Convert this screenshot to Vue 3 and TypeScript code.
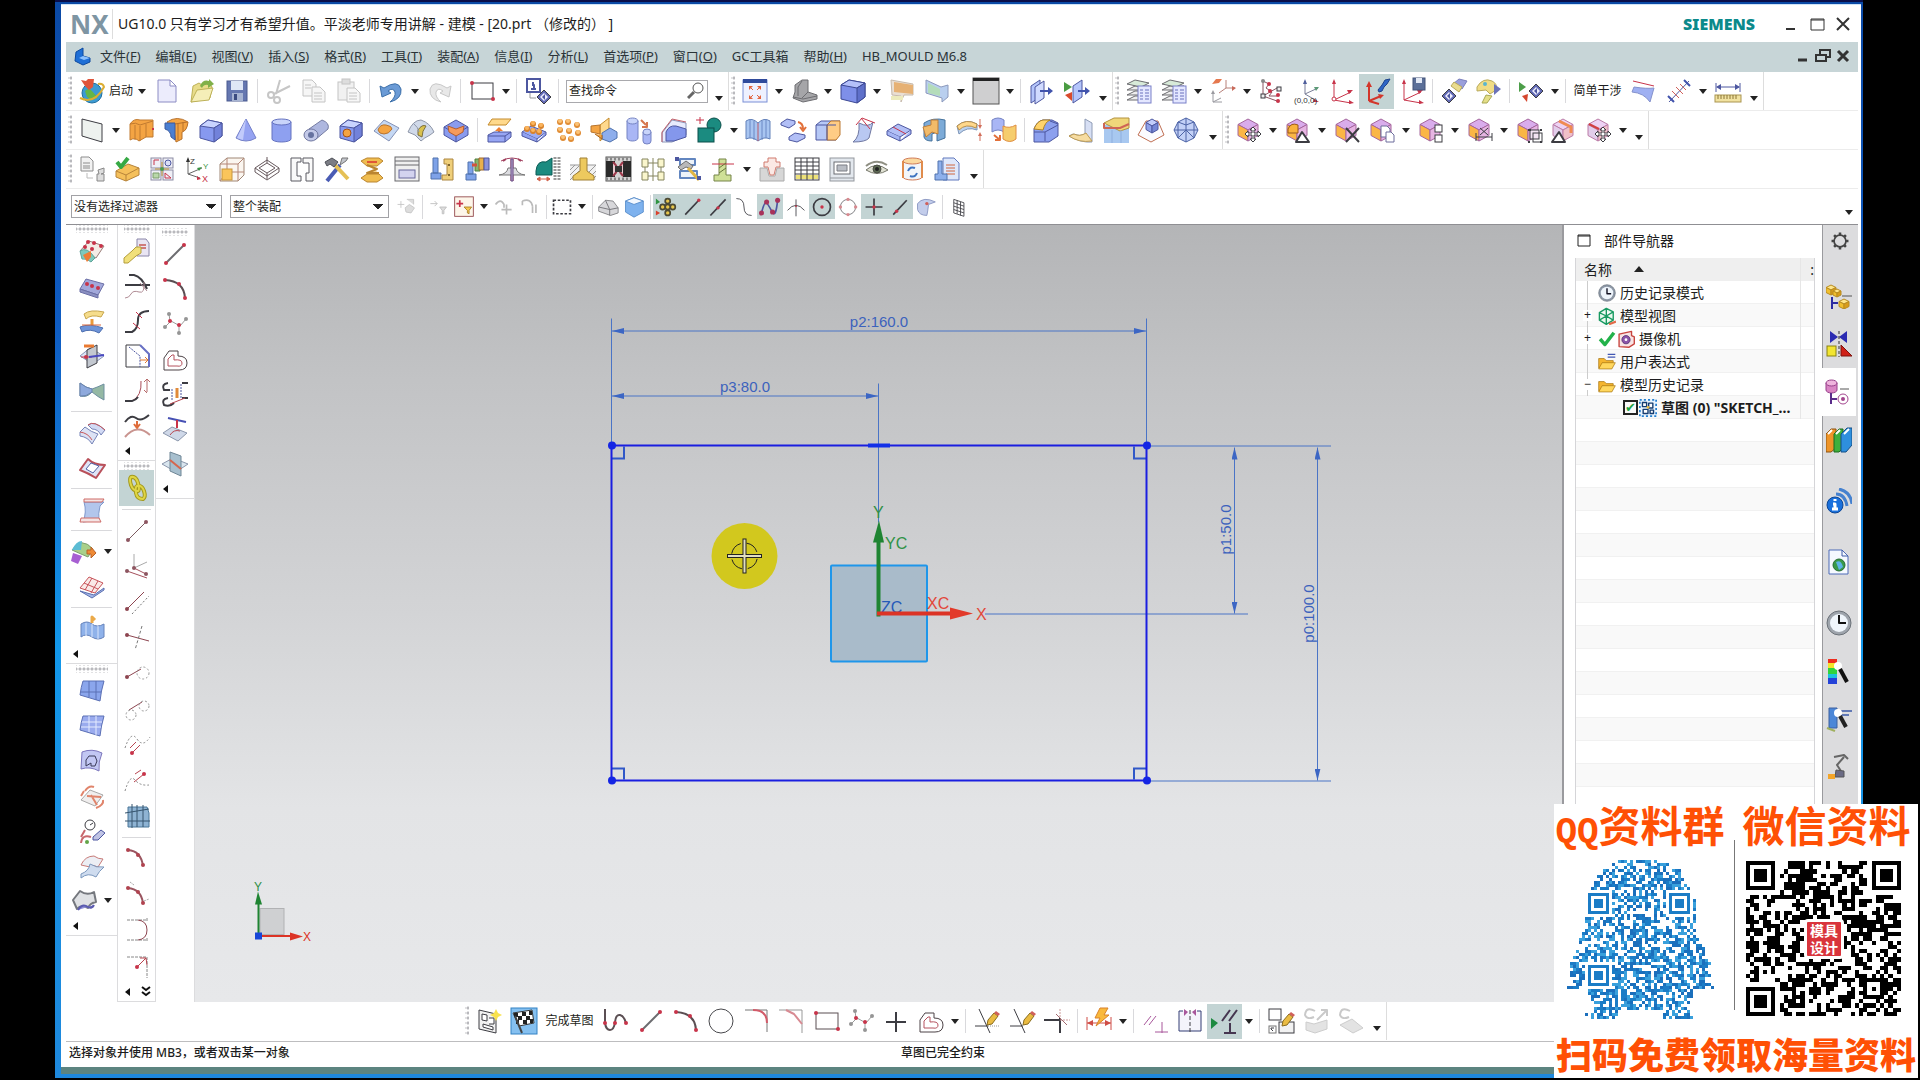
<script setup lang="ts">
interface Item {
  kind: 'icon' | 'arrow' | 'more' | 'sep' | 'handle' | 'text' | 'search' | 'combo' | 'foot'
  name: string
  active: boolean
}

/* ---------- small drawing helpers, all on a 26 x 26 grid ---------- */
const P = (d: string, fill = 'none', stroke = 'none', w = 1, dash = '') =>
  `<path d="${d}" fill="${fill}" stroke="${stroke}" stroke-width="${w}" stroke-linejoin="round"${dash ? ` stroke-dasharray="${dash}"` : ''}/>`
const C = (x: number, y: number, r: number, fill = 'none', stroke = 'none', w = 1) =>
  `<circle cx="${x}" cy="${y}" r="${r}" fill="${fill}" stroke="${stroke}" stroke-width="${w}"/>`
const R = (x: number, y: number, w: number, h: number, fill = 'none', stroke = 'none', sw = 1) =>
  `<rect x="${x}" y="${y}" width="${w}" height="${h}" fill="${fill}" stroke="${stroke}" stroke-width="${sw}"/>`
const T = (x: number, y: number, s: string, size: number, fill: string) =>
  `<text x="${x}" y="${y}" font-size="${size}" font-family="Liberation Sans, sans-serif" fill="${fill}">${s}</text>`
const cube = (x: number, y: number, s: number, t: string, l: string, r: string, st: string) => {
  const k = Math.round(s * 0.9)
  const h = s / 2
  return P(`M${x} ${y - s}l${k} ${h}l${-k} ${h}l${-k} ${-h}z`, t, st) +
    P(`M${x - k} ${y - h}l${k} ${h}v${s}l${-k} ${-h}z`, l, st) +
    P(`M${x + k} ${y - h}l${-k} ${h}v${s}l${k} ${-h}z`, r, st)
}
const can = (x: number, y: number, w: number, h: number, a: string, b: string, st: string) =>
  P(`M${x} ${y}v${h}a${w / 2} 3 0 0 0 ${w} 0v${-h}`, a, st) +
  `<ellipse cx="${x + w / 2}" cy="${y}" rx="${w / 2}" ry="3" fill="${b}" stroke="${st}"/>`
const dots = (pts: number[][], color = '#c8344a', r = 2) => pts.map(([x, y]) => C(x, y, r, color)).join('')

const NAVY = '#4d57a0'
const SKY = '#c8d4fa'
const ORANGE = '#f4a443'
const CREAM = '#ffd98d'
const RED = '#c8344a'
const GREY = '#6c6c70'
const DARK = '#3c3c42'
const TEAL = '#1b8b80'

const moldCube = cube(12, 13, 11, '#d9acec', '#fab645', '#e6b4e2', '#a5669d')
const roseCube = cube(12, 13, 11, '#edd2f4', '#e2cdea', '#efc0c8', '#bb7ba6')
const cross4 = P('M17 10l3 3h-2v3h4v-2l3 3l-3 3v-2h-4v4h2l-3 3l-3 -3h2v-4h-4v2l-3 -3l3 -3v2h4v-3h-2z', '#fff', DARK)
const triMark = P('M17 15l7 10h-13z', '#fff', DARK, 2)
const axes = P('M5 22V3M5 22l17 -8M5 22l17 3', 'none', RED, 1) + P('M5 1l-2 5h4zM24 12l-6 0l2 4zM25 25l-5 -3v4z', RED)
const gAxes = P('M11 16V3M11 16l13 -6M11 16l12 7', 'none', '#7b7f98', 1) + P('M11 1l-2 5h4z', '#4f5f9c') + P('M25 9l-5 0l2 4z', '#5c9a77') + P('M25 24l-5 -3l-1 3z', RED)
const diamondMark = (x: number, y: number) => P(`M${x} ${y - 7}l7 7l-7 7l-7 -7z`, '#6169b5', DARK) + P(`M${x} ${y - 4}l4 4l-4 4l-4 -4z`, '#eef') + P(`M${x + 1} ${y - 3}v6l-3 -3z`, NAVY)
const pencil = (x: number, y: number) => P(`M${x} ${y}l1 -5l6 -7l4 3l-6 8z`, '#eabb42', '#8a6d1e') + P(`M${x + 7} ${y - 12}l2 -2l4 3l-2 2z`, '#d0605a')
const sheets = P('M1 22l8 -4h12l-8 4z', '#eee', GREY) + P('M1 17l8 -4h14l-8 4z', '#eee', GREY) + P('M1 12l8 -4h14l-8 4z', '#eee', GREY) + P('M1 6l8 -4l14 3l-8 4z', '#d7ead8', GREY) +
  R(12, 8, 13, 17, '#e4e7ff', '#7a80c8') + P('M14 12h3M19 12h4M14 15h3M19 15h4M14 18h3M19 18h4M14 21h3M19 21h4', 'none', '#6a70bc')
const folder = P('M1 22V8h8l3 3h10v3', '#f5b52e', '#a5730e') + P('M1 23l5 -9h19l-5 9z', '#ffd75e', '#a5730e')
const ghost = P('M3 10h8M7 6v8M12 14l5 -4l6 4l-4 6l-6 -1zM14 4h8v6', '#ddd', '#c4c4c4')

const icons: Record<string, string> = {
  globe: C(13, 15, 10, '#3b9ad3', '#1d6e9f') + P('M6 13q4 -4 7 0t6 6q-6 5 -11 0z', '#63b648') + P('M1 20q14 7 24 -11q-1 -4 -6 -3', 'none', '#dcae33', 2) + P('M2 2l5 1l2 -2h6l-1 8l-4 3l-4 -4z', '#e0543b'),
  new: P('M4 2h12l6 6v16h-18z', '#ececfc', '#8c8cc4') + P('M16 2v6h6z', '#fff', '#8c8cc4'),
  open: P('M2 24l2 -16l6 -3l3 2l7 -2l3 4l-2 11z', '#e8dc8a', '#bdb157') + P('M2 24l6 -12l16 -2l-4 12z', '#f5eeb8', '#bdb157') + P('M11 8q3 -7 9 -5v-2l5 5l-6 4v-3q-4 -1 -6 3z', '#80b049'),
  save: R(3, 3, 20, 20, '#6577b0', '#4b5b90') + R(7, 3, 12, 9, '#dfe7f6') + R(8, 15, 11, 8, '#a8b5d3') + R(10, 16, 3, 6, '#3b4b80'),
  cut: P('M14 2l-4 14M24 8l-16 8', 'none', '#c6c6c6', 2) + C(5, 17, 3, 'none', '#c6c6c6', 2) + C(11, 22, 3, 'none', '#c6c6c6', 2),
  copy: P('M2 2h9l4 4v12h-13z', '#f6f6f6', '#c4c4c4') + P('M11 9h8l5 5v10h-13z', '#f6f6f6', '#c4c4c4') + P('M13 15h8M13 18h8M13 21h8M4 7h6M4 10h6', 'none', '#c4c4c4'),
  paste: R(2, 4, 16, 18, '#f1f1f1', '#c4c4c4') + R(6, 1, 8, 5, '#ddd', '#c4c4c4') + P('M11 10h8l5 5v9h-13z', '#f7f7f7', '#c4c4c4') + P('M13 15h8M13 18h8M13 21h8', 'none', '#c4c4c4'),
  undo: P('M2 8L4 19L13 15L10 13Q15 9 17 14Q18 19 12 24Q24 21 23 11Q20 1 6 10z', '#6b9bd6', '#3d70a9'),
  redo: P('M24 8l-2 11l-9 -4l3 -2q-5 -4 -7 1q-1 5 5 10q-12 -3 -11 -13q3 -10 17 -1z', '#e8e8e8', '#c8c8c8'),
  rectsel: R(3, 5, 21, 16, '#fff', DARK) + dots([[3, 5], [24, 21]]),
  info: R(2, 1, 13, 13, '#fff', NAVY, 2) + P('M8 4v2M7 7h2v4M6 11h5', 'none', NAVY, 2) + P('M5 15v5h6', 'none', '#999') + diamondMark(19, 19),
  fit: R(1, 2, 24, 22, '#eef1ff', '#7b8fd6', 1) + R(1, 1, 24, 4, '#2f4a9b') + P('M7 8h4l-4 4zM19 8h-4l4 4zM7 21h4l-4 -4zM19 21h-4l4 -4z', '#e2643d') + P('M8 9l3 3M18 9l-3 3M8 20l3 -3M18 20l-3 -3', 'none', '#e2643d'),
  shade: P('M4 7l7 -5h6v12l9 3v4l-14 3l-10 -4l2 -6z', '#a5a5a8', '#6d6d71') + P('M2 19l10 2l14 -3M11 20l6 -6M11 3l-4 6v9', 'none', '#6d6d71'),
  cubeb: P('M1 7l8 -5l16 3v14l-8 6l-16 -4z', '#7e8fe9', '#3c4894') + P('M1 7l8 -5l16 3l-8 5z', '#b4c0fa', '#3c4894') + P('M17 10l8 -5v14l-8 6z', '#5f70ca', '#3c4894'),
  flago: P('M2 2l22 4v11h-9l-3 7v-6l-9 -1z', '#e9dfd3', '#c6b9ab') + P('M5 4l19 3v9l-19 -2z', '#e6b174') + P('M2 18h12v4h-12z', '#ecebbd'),
  flagb: P('M2 2l15 7l7 -2v12l-6 5v-4l-16 -5z', '#b9cfef', '#8c99bc') + P('M4 5l12 6v7l-12 -3z', '#b4dcba'),
  greybox: R(0, 0, 26, 26, '#cfcfd0', '#555', 1) + R(0, 0, 26, 3, '#222'),
  door1: P('M2 8l9 -6v17l-9 6z', '#b4c5fb', NAVY) + P('M6 9l9 -6v17l-9 6z', '#d1dbff', NAVY) + P('M11 12h8v-3l5 4l-5 4v-3h-8z', '#4153ac'),
  door2: P('M9 8l9 -6v17l-9 6z', '#b4c5fb', NAVY) + P('M0 4l8 5l-8 5z', '#4a9c42') + P('M1 17l7 -3v9z', '#d94b2c') + P('M14 12h7v-3l5 4l-5 4v-3h-7z', '#4153ac'),
  layers: sheets,
  csysmove: P('M3 14v10l8 -4M3 24h9', 'none', '#9a9aa0', 1) + P('M16 2v8h9M16 10l-7 5', 'none', '#b78079', 1) + P('M2 6l4 -5h6l-3 4z', '#e5784e') + P('M22 8l4 2l-4 3z', '#c96a5a') + P('M3 12l-2 4h4z', '#9a9aa0'),
  tree: P('M4 3v15l14 -8M4 3l6 3l-3 4l6 4l-3 4h8M4 18l14 5', 'none', '#8a5560', 1) + dots([[10, 6], [11, 13], [19, 17], [19, 23]]) + C(4, 3, 2, '#888') + R(2, 16, 4, 4, '#eee', DARK) + R(18, 9, 4, 4, '#eee', DARK),
  csys0: gAxes + T(0, 25, '(0,0,0)', 8, '#333'),
  csysr: axes + C(5, 21, 2, '#fff', RED),
  csysact: P('M5 23V7M5 23l12 -5M5 23l10 3', 'none', '#d3362b', 2) + P('M5 3l-3 6h6zM20 17l-6 -1l2 5z', '#d3362b') + P('M14 12l4 -5l3 -5l5 -1l-3 5l-3 3l-2 4l-3 1z', '#2f67c6', '#1e448c'),
  csyssave: axes + R(14, 0, 12, 12, '#5b6f98', '#435379') + R(17, 0, 6, 5, '#e3e9f5'),
  brush: P('M12 6l6 -5l8 2l-5 8z', '#9a9fdb', '#7b80bd') + P('M10 8l3 -4l8 5l-3 5z', '#eadc8d', '#b9a95c') + diamondMark(8, 18),
  fish: P('M1 9q6 -10 15 -6q6 3 4 9l-6 4l-4 -4l-9 1z', '#f0dc85', '#b9aa5d') + P('M10 17l-4 8h5l5 -7z', '#e4de88', '#a9a955') + C(9, 6, 2, '#5bb5cf') + P('M18 6l7 5l-7 6z', '#6b73b9'),
  play: P('M1 4l7 5l-7 5z', '#4c9e49') + P('M4 18l6 -2l-1 8z', '#d5472e') + diamondMark(18, 13),
  surf: P('M2 3l21 5', 'none', RED) + P('M3 9q13 2 20 1l-4 14q-6 -9 -18 -10z', '#9fb0f2', '#8592cc'),
  meas: P('M3 24l20 -21', 'none', NAVY) + P('M2 18l6 6M18 2l6 6', 'none', '#4153ac', 2) + P('M6 13l7 7M10 9l7 7M14 6l6 6', 'none', '#d0605a', 1),
  ruler: P('M1 5v9M25 5v9M2 9h22', 'none', NAVY, 1) + P('M1 9l5 -3v6zM25 9l-5 -3v6z', NAVY) + R(0, 17, 26, 7, '#f1e2a0', '#aa9550') + P('M3 17v4M6 17v4M9 17v4M12 17v4M15 17v4M18 17v4M21 17v4', 'none', '#8c7736'),
  /* feature bar */
  plane: P('M3 2l20 5v18l-20 -6z', '#eef2ef', DARK, 1),
  extrude: P('M2 7q4 -6 10 -4h13v17h-7l-7 4q-4 -4 -9 -1z', ORANGE, '#c07a30') + P('M2 7q6 -2 10 1l13 -4M7 8v15M12 9v15M18 7v13', 'none', '#c07a30') + P('M24 12h2', 'none', RED, 2),
  revolve: P('M4 5q10 -7 21 0q-1 9 -6 10v7l-6 3q-1 -12 -9 -20z', ORANGE, '#b7702a') + P('M2 6h10v17l-4 -3q0 -6 -6 -8z', '#4b7fd1', '#3d5b9e') + P('M15 7v16M20 5v9M12 7l12 -2', 'none', '#b7702a'),
  block: P('M2 9l8 -6l14 3v13l-8 6l-14 -4z', '#8799ef', NAVY) + P('M2 9l8 -6l14 3l-8 5z', '#c9d4ff', NAVY) + P('M16 11l8 -5v13l-8 6z', '#7282da', NAVY),
  cone: P('M13 2l10 19q-10 6 -20 0z', '#95a3f2', '#7480c8') + P('M13 2l-3 21l-6 -2z', '#c2cbfb'),
  cyl: can(4, 5, 19, 17, '#8ea0f0', SKY, '#6472c0'),
  tube: P('M6 12l13 -9q8 3 6 9l-13 11z', '#aeb7df', '#757ca2') + `<ellipse cx="8" cy="18" rx="7" ry="6" fill="#c3c9e8" stroke="#6f76a0"/>` + C(8, 18, 3, '#6672a0'),
  holecube: P('M2 9l8 -6l14 3v13l-8 6l-14 -4z', '#8799ef', NAVY) + P('M2 9l8 -6l14 3l-8 5z', '#c9d4ff', NAVY) + P('M16 11l8 -5v13l-8 6z', '#7282da', NAVY) + C(9, 16, 4, ORANGE, '#a35218'),
  boss: P('M1 14l10 -11l15 8l-10 13z', '#c5d8f4', '#8592b6') + P('M5 13q2 -6 8 -5q6 1 6 4q-3 5 -8 5q-5 0 -6 -4z', ORANGE, '#b77330'),
  shell: P('M0 15q5 -12 13 -12q9 3 13 12l-4 3q-6 3 -9 6l-6 -6z', '#d0d9e9', '#8e96a8') + P('M10 13q4 -6 8 -4q-4 5 -4 11l-4 -2z', '#d9c14e', '#7c6f3b') + P('M6 7q4 3 5 8', 'none', '#8e96a8'),
  pad: P('M1 10l12 -7l12 7v8l-12 7l-12 -7z', '#8a9bee', NAVY) + P('M1 10l12 7l12 -7M13 17v8', 'none', NAVY) + P('M5 9l8 3l8 -3l-1 6l-7 4l-7 -4z', '#f79b5c', '#b45e31'),
  datumup: P('M6 2h19l-5 6h-18z', CREAM, '#c48b2d') + P('M12 18v-4h-3l4 -4l4 4h-3v4z', '#ef8132') + P('M2 18l6 -3h17v5l-6 5h-17z', '#97a6f4', NAVY) + P('M2 19h17l6 -4M19 19v6', 'none', NAVY),
  pattern: P('M1 15l9 -6l15 6l-9 7z', '#9dadf4', NAVY) + P('M1 15v4l15 6v-3M25 15v3l-9 7', '#91a2f2', NAVY) + dots([[6, 12], [12, 7], [20, 9], [12, 14], [18, 15]], '#d9822a', 3) + dots([[6, 11], [12, 6], [20, 8], [12, 13], [18, 14]], '#fbb55e', 2),
  patt2: dots([[4, 5], [12, 5], [21, 8], [4, 13], [13, 14], [22, 16], [7, 21], [15, 22]], '#e08c34', 3) + dots([[4, 4], [12, 4], [21, 7], [4, 12], [13, 13], [22, 15], [7, 20], [15, 21]], '#fbc377', 2),
  mirror: P('M9 8l9 -7v15l-9 8z', CREAM, '#c48b2d') + P('M0 9l9 -1v9l-9 -2z', ORANGE, '#b7742d') + P('M11 16l8 -5l7 4v6l-7 4l-8 -3z', '#8eaeec', '#5173ad') + P('M4 17l7 5v-4', ORANGE, '#a7641d'),
  cyl2: can(1, 4, 11, 17, '#a9b6f5', SKY, '#7583c3') + can(17, 15, 8, 9, '#a9b6f5', SKY, '#7583c3') + P('M15 3l5 5M21 5v5h-5', 'none', '#d5774f', 2),
  sweep: P('M1 16l10 -13l14 3v12l-14 7h-10z', '#e7ebfd', '#8a96b8') + P('M5 24v-9q3 -7 10 -6l10 3v8l-12 4z', '#8497ec', NAVY) + P('M1 25V15l10 -13l14 3', 'none', '#c2606a'),
  unite: C(18, 8, 7, TEAL, '#0b4f4a') + R(2, 11, 16, 14, TEAL, '#0b4f4a') + P('M4 0v7M0 3h8', 'none', RED, 1),
  bookcyl: P('M1 4q6 -4 12 2q6 -6 12 -2v18q-6 -3 -12 2q-6 -5 -12 -2z', '#a8c5f1', '#6381ba') + P('M5 3v18M9 4v19M17 4v19M21 3v18', 'none', '#6a88c4') + P('M13 6v18', 'none', '#ba5a68'),
  move: P('M1 6l6 -4l8 2v3l-6 4l-8 -3zM9 20l6 -4l10 2v3l-8 4l-8 -2z', '#b2bff6', NAVY) + P('M18 5q5 1 5 7M20 10l3 4l3 -4', 'none', '#e2703a', 2),
  split: P('M1 8l5 -4h19l-4 4v15h-20z', '#b6c8f6', NAVY) + P('M12 8l4 -4h9v14l-4 5h-9z', '#ffcc85', '#bb7831') + P('M1 8h20M12 8v15', 'none', NAVY),
  trim: P('M8 6q10 5 14 -1l-4 16q-3 4 -16 4q7 -5 6 -19z', '#b9c8f2', '#7078a1') + P('M5 8l6 -7l13 5M10 1l9 11', 'none', RED, 1),
  plate: P('M1 14l11 -7l13 6l-11 7z', '#b2bff6', NAVY) + P('M1 14v4l13 6v-4M25 13v4l-11 7', '#a6b5f4', NAVY) + P('M7 10l13 7', 'none', RED),
  wrap: P('M3 6q9 -6 21 -3v18l-8 3v-9l-5 2v7q-7 0 -8 -4z', '#7dabd8', '#46729c') + P('M2 10l8 -2v-5h7v14l-6 -2l-6 5z', '#f2bb69', '#be7e3a'),
  thicken: P('M1 9q9 -8 20 -2v6q-10 -4 -18 4z', '#bcd2ef', '#7a93b7') + P('M1 9q9 -8 20 -2l-1 4q-10 -5 -17 2z', '#ffd88b', '#b98f4a') + P('M24 2v8M24 17v7', 'none', '#d26f5b', 1) + P('M24 12l-2 -4h4zM24 15l-2 4h4z', '#d26f5b'),
  cyl3: P('M1 3q6 -4 12 0v12q-6 -4 -12 0z', '#a9b6f5', '#7583c3') + P('M12 9q6 3 13 -1v14q-6 5 -13 0z', '#f6cd6d', '#e08f43') + P('M3 18l6 5M9 18v5h-5', 'none', '#e2703a', 2),
  chamfer: P('M1 12q3 -8 9 -9h9l6 3v13l-9 6h-15z', '#8ca0ee', NAVY) + P('M1 12q3 -8 9 -9h7q-5 2 -7 10z', '#ffd36b', '#b08322') + P('M1 15h11v9M12 15l13 -7M17 4l8 3', 'none', NAVY),
  draft: P('M17 2l7 4v19q-11 1 -23 -6l4 -2q7 3 12 0z', '#d7dff4', '#8f9cb6') + P('M1 19l5 -2q6 3 12 -1l6 8q-13 2 -23 -5z', '#f6dca1', '#be9b52'),
  boxface: R(1, 8, 25, 18, '#a8c8f0') + P('M1 6l10 -5h15v10l-9 3z', '#f0d77a', '#b3923f') + P('M1 6v5h16l9 -4', 'none', '#cf6656', 2) + P('M9 13v13M18 13v13', 'none', '#8eaede'),
  tri: P('M8 4h12l6 14l-13 7l-13 -7z', '#fbfbff', '#c06f52') + cube(14, 9, 7, '#c2cdfb', '#90a1ea', '#7586d6', NAVY),
  sphere: P('M13 1l8 4l4 8l-4 8l-8 4l-8 -4l-4 -8l4 -8z', '#c3d1f7', '#4c63a6') + P('M1 13h24M13 1v24M5 5l8 3l8 -3M5 5v16M21 5v16M13 13l8 8M13 13l-8 8', 'none', '#4c63a6'),
  mMove: moldCube + cross4,
  mTri: moldCube + P('M3 12q3 -7 10 -4v8h-10z', '#fab23c', '#9a5a1d') + triMark,
  mX: moldCube + P('M12 11l13 14M25 11l-13 14', 'none', DARK, 2),
  mCopy: moldCube + P('M12 9h6l3 3v8h-9z', '#fff', '#6d6d9c') + P('M17 15h5l3 3v7h-8z', '#fff', '#6d6d9c'),
  mGrid: moldCube + R(17, 8, 7, 7, '#fff', DARK) + R(17, 18, 7, 7, '#fff', DARK),
  mDim: moldCube + P('M9 20h16M9 16v8M25 16v8M13 11l8 7M21 11l-8 7', 'none', DARK, 1),
  mSq: moldCube + R(14, 13, 9, 9, '#f4e4f4', DARK) + R(17, 16, 9, 9, 'none', DARK) + P('M12 12h3v2h-3zM24 24h2v2h-2zM12 24h2v2h-2zM24 12h2v2h-2z', DARK),
  rTri: roseCube + P('M8 4l12 6v6', 'none', '#f08a52', 3) + P('M8 15l6 10h-13z', '#fff', DARK, 2),
  rMove: roseCube + P('M3 7l10 5', 'none', '#d23f3f', 2) + cross4,
  /* mould bar */
  note: P('M2 1h8l4 4v10h-12z', '#f2f2f2', '#8c8c8c') + P('M4 7h7M4 10h7M4 12h7', 'none', '#8c8c8c') + P('M8 17v5h6', 'none', '#bbb') + P('M19 14l6 -2v5l-3 1h3v7h-7v-7h2z', '#ddd', '#888'),
  checkblock: P('M2 15l12 -7l11 4v7l-13 6l-10 -4z', '#f5c05b', '#b7843a') + P('M2 15l10 4l13 -7M12 19v6', 'none', '#b7843a') + P('M3 6l4 5l7 -9', 'none', '#36a944', 4),
  fourviews: [[2, 2], [14, 2], [2, 14], [14, 14]].map(([x, y]) => R(x, y, 10, 10, '#efeff6', '#8b8ba3')).join('') + C(19, 7, 3, '#d9def5', NAVY) + P('M5 9v-5h5M16 22v-5l6 5z', 'none', RED, 1) + P('M4 17h6v5h-6z', '#b9d8a9', '#7d9d6d') + P('M13 6v14M6 13h14', 'none', '#bd9431') + C(13, 13, 2, '#4c9a54'),
  csyxyz: P('M4 18V3M4 18l14 -6M4 18l12 4', 'none', '#666', 1) + P('M4 1l-2 5h4z', '#333') + P('M18 11l-5 1l2 3z', '#3a9444') + P('M17 23l-4 -3v4z', RED) + T(6, 8, 'Z', 8, '#333') + T(19, 13, 'Y', 8, '#3a9444') + T(18, 26, 'X', 9, RED),
  cornerbox: P('M1 8l7 -6h17v17l-6 6h-18z', '#fbf6f0', '#9f8674') + P('M1 8h18v17M19 8l6 -6M8 2v14l-7 9M8 16h17', 'none', '#b48677') + R(3, 13, 10, 11, '#fac55b', '#c8963d'),
  diamond: P('M1 12l12 -8l12 8l-12 8zM5 12l8 -5l8 5l-8 5zM1 12v4l12 8l12 -8v-4M13 1v6M13 17v6', 'none', '#67595d', 1),
  bracket: P('M2 2h10v4h-4v14h4v5h-10zM14 2h10v23h-7v-8h3v-10h-6z', '#fafafa', '#5a5a62', 1),
  tools: P('M3 25l13 -16', 'none', '#4a5cb4', 4) + P('M24 23l-15 -16', 'none', '#e5c055', 4) + P('M1 6l7 -4l6 4l-4 5l-4 -3l-3 2z', '#7b7d85', '#4e5058') + P('M16 9l2 -7l6 0l-2 3z', '#c2c5cc', '#777'),
  spring: P('M2 5l6 -3h12l4 3l-6 5h-10zM2 22l6 -4h12l4 4l-6 4h-10z', '#f0bd50', '#ba8530') + P('M8 9q10 4 10 4t-10 4h12', '#f7d68a', '#ba8530', 2) + P('M8 6h10', 'none', '#df5636', 2),
  table: R(1, 1, 24, 24, '#efefef', '#68686c') + P('M1 5h24M1 9h24', 'none', '#68686c') + R(5, 14, 16, 8, '#d3d3ef', '#68689c'),
  bolt1: P('M4 2h5v15h-5zM2 17h10v6h-10z', '#7ea2e8', '#5173ad') + P('M15 3h9v21h-11v-5h5v-11h-3z', '#efcf7a', '#ac8640') + C(20, 9, 1, '#5c4415') + C(20, 19, 1, '#5c4415'),
  bolt2: P('M4 6h5v12h-5zM2 18h10v6h-10z', '#7ea2e8', '#5173ad') + P('M11 3h5v12h-5z', '#86b56d', '#4f7c3a') + P('M15 2h5v12h-5z', '#e8b04b', '#9c6730') + P('M20 2h5v12h-5z', '#8a91da', '#4f5799') + P('M8 9h5', 'none', '#d2533e', 3),
  tee: P('M2 5q11 -6 22 0M12 3v22M14 3v22', 'none', '#a2415f', 1) + P('M0 19q8 -1 9 -7h8q1 6 9 7z', '#dcdce0', '#777') + P('M12 3v22h2v-22z', '#b9a8cf', '#6b4f86') + P('M4 5l3 -2M22 5l-3 -2', 'none', '#a2415f', 2),
  mouse: P('M1 15q1 -11 10 -9l6 -4v17h-16z', TEAL, '#0b5b54') + P('M20 1v24M24 1v24', 'none', '#999', 3, '2 1') + P('M2 23h13M2 23l3 -2v4zM15 23l-3 -2v4z', '#d2644e', '#d2644e'),
  moldh: R(0, 9, 26, 15, '#f1f1f1') + P('M0 9h26M0 14l5 -5M0 19l9 -9M0 24l9 -9M17 24l9 -9M22 24l4 -4M17 18l9 -9', 'none', '#999') + P('M10 2h7v13l7 5v4h-21v-4l7 -5z', '#edc95e', '#a18034'),
  blackh: R(1, 1, 25, 24, '#d3d3d3', '#555') + P('M1 5h9v16h-9zM18 5h8v16h-8z', '#2a2a2a') + P('M8 6q8 7 0 14M18 6q-7 7 0 14', '#e9c9cf', '#9e3a4c', 2) + P('M10 10h7v6h-7z', '#333') + P('M1 3h25M1 23h25', 'none', '#888', 3, '2 2'),
  frame: P('M2 3h6v8h-6zM18 3h6v8h-6zM2 16h6v8h-6zM18 16h6v8h-6zM8 7h10M8 20h10M13 2v23M5 11v5M21 11v5', '#faf6cd', '#85855f', 1),
  wrench: P('M5 3h15v6h-15zM5 15h17v7h-17z', '#edf3fa', '#6286c0', 2) + P('M3 11l8 -6l7 5l-2 3l-5 -2l-5 3z', '#b9b9b9', '#6e6e6e') + P('M13 12l11 12', 'none', '#e0b545', 3) + R(0, 1, 4, 4, NAVY) + R(22, 20, 4, 4, NAVY),
  bolth: P('M9 3h7v16h5v6h-17v-6h5z', '#cfe097', '#76854a') + P('M2 8h22', 'none', RED, 1) + P('M9 12l7 -5M9 17l7 -5', 'none', '#66753a'),
  moldred: P('M1 12h7l2 8h6l2 -8h7v13h-24z', '#d7d7d7', '#aaa', 1) + P('M9 2h8v4h4v5h-4l-2 8h-4l-2 -8h-4v-5h4z', '#fbe9e5', '#d07a6e', 1),
  grid: R(1, 2, 24, 22, '#fff', DARK) + R(2, 19, 22, 4, '#eee27a') + P('M1 6h24M1 10h24M1 14h24M1 18h24M7 2v22M13 2v22M19 2v22', 'none', DARK),
  panel: R(1, 2, 24, 23, '#e3e8ee', '#93979d') + R(5, 6, 16, 12, '#fff', '#6a6d73') + P('M8 9h10v6h-10z', '#b9bdc4', '#7a7d83') + P('M1 22h24', 'none', '#93979d'),
  eye: P('M2 14q10 -9 22 0q-11 7 -22 0z', '#dfe0d2', '#77786c', 1) + C(13, 13, 4, '#5d6a53', '#4c4e46') + C(13, 13, 2, '#222') + P('M2 10q10 -8 21 -1', 'none', '#8e8e82', 2),
  drum: can(4, 5, 19, 16, '#f3f6fa', '#fbd9a0', '#d07c58') + P('M4 5v17M23 5v17', 'none', '#e08c4d', 2) + P('M9 15q2 -5 7 -3M18 17q-2 5 -7 3', 'none', '#3f74c0', 2),
  report: P('M9 2h11l5 5v17h-16z', '#dfe8fb', '#6178bd') + P('M12 9h9M12 12h9M12 15h9M12 18h9', 'none', '#d0673f') + P('M4 5h4v13h5v6h-12v-6h3z', '#8eb0ec', '#5173ad'),
  /* selection bar */
  dimA: ghost, dimB: P('M4 9h8M12 9l-3 -3M12 9l-3 3M15 13h8l-3 4v4h-2v-4z', '#ddd', '#bbb'),
  boxed: R(2, 1, 22, 23, '#fdf6ea', '#8d3e42', 1) + P('M8 5v8M4 9h8', 'none', RED, 2) + P('M13 13h9l-3 4v4l-2 -1v-3z', '#f6c84d', '#a57b25'),
  dimC: P('M3 10q6 -8 10 0v4M16 10v12M10 16h12', 'none', '#bbb', 2), dimD: P('M4 6q10 -4 12 6M16 12v8M20 10v10M4 6v5', 'none', '#bbb', 2),
  dash: R(3, 5, 20, 16, 'none', DARK, 2).replace('/>', ' stroke-dasharray="3 2"/>'),
  house: P('M2 13l8 -8l9 1l6 8v6l-9 3l-14 -5z', '#d7d7da', '#7a7a7e') + P('M2 13l13 3l10 -2M15 16v7M10 5l5 11', 'none', '#6a6a6e'),
  opencube: P('M3 6l10 -4l11 4v13l-11 6l-10 -6z', '#7eb2ee', '#5389c9') + P('M3 6l10 4l11 -4l-11 -4z', '#f3f8ff', '#5389c9'),
  snap: P('M1 3l5 4l-5 3z', '#2f9440') + P('M1 17l5 3l-5 3z', '#d9412c') + dots([[15, 6], [9, 13], [21, 13], [15, 20], [15, 13]], '#4c4a35', 4) + dots([[15, 6], [9, 13], [21, 13], [15, 20], [15, 13]], '#e7c64c', 2),
  line: P('M5 22L21 5', 'none', DARK, 2) + dots([[21, 5]]),
  mid: P('M4 23L22 4', 'none', DARK, 2) + dots([[13, 14]]),
  curve: P('M4 3q9 0 9 10t9 10', 'none', DARK, 1),
  poly: P('M3 20Q6 8 8 8T15 18T22 4', 'none', NAVY, 2) + dots([[3, 20], [9, 7], [16, 19], [22, 5]], '#a8335a', 3),
  cross: P('M3 17q10 -12 20 0M13 4v20', 'none', DARK, 1) + C(13, 12, 1, RED),
  circ: C(13, 13, 10, 'none', DARK, 2) + dots([[13, 13]]),
  ring: C(13, 13, 9, 'none', GREY, 1) + dots([[13, 4], [4, 13], [22, 13], [13, 22]], '#d88a90', 2),
  plus: P('M13 3v20M3 13h20', 'none', DARK, 2) + dots([[13, 13]]),
  slash: P('M5 22L21 5', 'none', DARK, 2) + dots([[9, 18]]),
  face: P('M3 9q7 -9 21 -2l-8 3q-1 9 -2 13q-9 0 -11 -7z', '#c3cdeb', '#8390bd') + dots([[14, 9]], '#d0605a'),
  mesh: P('M8 4l12 4v16l-12 -4zM12 5v16M16 7v16M8 8l12 4M8 12l12 4M8 16l12 4', 'none', DARK, 1),
  /* surface columns */
  sNet: P('M1 13l9 -10l15 5l-8 12z', '#f3ece6', '#997c77') + P('M1 13q7 -5 15 7l-4 4q-4 -4 -9 -3z', '#7dc9bd', '#5fa499') + dots([[9, 4], [15, 5], [22, 8], [6, 9], [13, 11]], RED, 2) + P('M4 17l8 -4v6l-4 5z', '#ee7c35'),
  sPlate: P('M1 16l6 -10l18 5l-6 11z', '#a2a8da', '#6b6fa6') + dots([[8, 11], [13, 13], [19, 15]], RED, 2) + P('M1 16l18 6v3l-18 -6z', '#8a8fc1', '#6b6fa6'),
  sLift: P('M5 6q6 -5 20 -2l-3 5q-10 -3 -15 2z', '#f6dd8c', '#c7a64d') + P('M13 17v-6', 'none', '#eb9a3a', 3) + P('M1 19q9 -4 23 1l-4 5q-9 -5 -17 -1z', '#6e94d8', '#4d6fb0') + P('M3 17h19', 'none', '#df6b3d', 1),
  sCut: P('M1 13l10 -8l14 8l-11 8z', '#dde4f6', '#8694b8') + P('M8 7l10 -5v18l-10 5z', '#c3c8d0', DARK) + P('M5 3h10', 'none', '#ea7a31', 3) + P('M2 14h11', 'none', RED, 1) + dots([[7, 14]]) + P('M10 14l15 -2', 'none', '#4a4ac0', 2),
  sBow: P('M1 5q6 5 12 6q6 -2 12 -5v16q-6 -3 -12 -8q-5 6 -12 4z', '#94b8a4', '#6e8fa0') + P('M1 5q6 5 12 6v3q-6 5 -12 4z', '#8ea9dc', '#6a83b0'),
  sTwo: P('M1 12l5 -5q6 5 13 7l-6 10q-4 -7 -12 -8z', '#dce2f4', '#7684b8') + P('M1 12q8 1 12 8', 'none', '#c8585a') + P('M9 5q6 -5 17 5l-4 5q-3 -6 -9 -6z', '#d2daf4', '#7684b8') + P('M9 5q6 -5 17 5', 'none', '#c8585a'),
  sFrame: P('M1 15l8 -11q6 6 17 6l-9 13q-8 -5 -16 -8z', '#e0e4f6', '#b9505a', 2) + P('M7 14l5 -6l8 3l-6 7z', '#fff', '#5262a5'),
  sZ: P('M5 5h20l-4 4q-2 8 -1 14l-16 2q4 -10 1 -20z', '#b2c6ec', '#7f98cb') + P('M5 2h20l-2 3h-18zM2 21h18l2 4h-21z', '#f4e4e4', '#ce6b66', 1),
  sRain: P('M1 11q9 -14 21 -1l-5 8l-7 -3z', '#a8d08a', '#7fa070') + P('M1 11q4 -9 10 -9l-1 9z', '#5cbcd4') + P('M2 14l9 3l-4 8l-7 -3z', '#a75fd2') + P('M16 11h4v-3l5 6l-5 5v-4h-4z', '#ef8a35', '#b96229'),
  sRed: P('M1 14l9 -11l14 6l-8 10z', '#f9e9e7', '#c8545a', 1) + P('M1 17l12 7l12 -8v-2l-10 7z', '#a2b6e7', '#5b6fb0') + P('M5 9l14 6M13 4l-7 12M19 7l-7 12', 'none', '#c8545a', 1),
  sWave: P('M2 8q6 -4 11 0t12 0v13q-6 4 -12 0t-11 0z', '#8fb2ea', '#6784bc') + P('M7 7v13M13 8v13M19 10v13', 'none', '#d9e5fb') + P('M13 7v-6l3 3', 'none', '#ebaa4a', 3),
  wA: P('M4 3h21q-3 10 -4 20l-20 -6q1 -8 3 -14z', '#8ba6ec', '#5b70b5') + P('M10 3v16M17 3v19M2 14h20', 'none', '#5b70b5'),
  wB: P('M4 3h21q-3 10 -4 20l-20 -6q1 -8 3 -14z', '#9aabee', '#5b70b5') + P('M10 3v16M17 3v19M3 9h20M2 14h20', 'none', '#e4ebff'),
  wC: P('M3 4q10 -4 20 1q-4 9 -3 18q-9 -5 -18 -2z', '#c2c7f3', '#7b75bc') + P('M7 18v-6l3 -4h6l2 5l-2 5h-4v-3z', 'none', '#3a3a58', 1),
  wD: P('M2 17l9 -10l13 5l-8 11z', '#f0eeee', '#a8a8a8') + P('M6 8q4 -6 9 -4M17 25q8 -3 7 -8M2 13l3 -5M12 12l6 10M8 13l14 1', 'none', '#e0846b', 2),
  wE: C(11, 7, 5, '#fff', DARK, 1) + P('M11 7l3 -2', 'none', DARK) + P('M2 25q1 -9 10 -6M2 19l4 -7', 'none', '#c8686d', 2) + P('M14 19l8 -7l4 3l-7 7h-5z', '#bfc3e4', NAVY) + dots([[8, 24]], '#63a447'),
  wF: P('M2 12q4 -9 13 -9q4 3 9 3l-5 8q-5 -3 -8 0z', '#eceef4', '#c87b78') + P('M2 21q8 -3 9 -10q6 4 14 3q-5 4 -8 10q-8 -5 -15 1z', '#cfdcef', '#7a97bd'),
  wG: P('M2 12l7 -9q7 5 14 1l2 10q-6 1 -8 6q-7 -4 -11 1z', '#dfe1e4', '#75787e', 2) + P('M7 22q4 -7 10 -3q4 2 6 -2', '#8f8fd6', '#5b5bb0', 2),
  /* curve columns */
  key: P('M13 1h9l3 4v13h-12z', '#e9e5f3', '#8a86a9') + P('M15 7h7M15 10h7', 'none', '#cf7b7b', 2) + P('M8 13l4 -4h5v6l-5 3l-8 7h-4v-5z', '#f1e07a', '#b39d3c'),
  kA: P('M5 2h5q8 2 13 14M1 12h25', 'none', DARK, 2) + P('M1 25q4 0 6 -4t8 -2t5 -10M16 10l7 8', 'none', '#b08c95', 1),
  kB: P('M1 24h7q6 -3 6 -12t11 -9', 'none', DARK, 2) + P('M12 4l6 6M9 15l7 6', 'none', RED, 1),
  kC: P('M2 2h14l9 9v13h-23z', '#fff', DARK, 1) + P('M16 2l9 9v13', 'none', '#6870c4', 2) + P('M5 4l11 9v11', 'none', NAVY, 1, '2 1') + P('M16 17h8M21 14l3 3l-3 3', 'none', '#e1792e', 1),
  kD: P('M8 23q10 -5 9 -20', 'none', '#a94b57', 1) + P('M1 23h7q4 -1 6 -4', 'none', DARK, 2) + P('M23 2v12M20 4l3 -3l3 3M20 12l3 3', 'none', '#b56a6a', 1),
  kE: P('M1 9q6 -8 11 -4t13 -3', 'none', DARK, 2) + P('M1 24q12 -14 25 -2', 'none', '#c9948f', 2) + P('M13 8v7M10 11l3 4l3 -4', 'none', '#df6c3a', 2),
  chain: P('M7 2q5 -1 7 6t0 8q-5 0 -7 -6t0 -8zM13 11q5 -1 7 5t-1 8q-6 0 -7 -6t1 -7z', 'none', '#a49a1c', 4) + P('M7 2q5 -1 7 6t0 8q-5 0 -7 -6t0 -8zM13 11q5 -1 7 5t-1 8q-6 0 -7 -6t1 -7z', 'none', '#dfd544', 2),
  lineR: P('M4 22L22 4', 'none', GREY, 2) + dots([[4, 22], [22, 4]]),
  lineB: P('M4 22L22 4', 'none', '#7c5b60', 1) + dots([[4, 22], [22, 4]], '#8d5560'),
  lAxes: P('M10 15V1M10 15l13 -6', 'none', '#aaa', 1) + P('M3 18l20 7M10 15l12 6', 'none', '#a5505c', 1) + dots([[3, 18], [22, 21], [10, 15]], '#8d5560'),
  lPar: P('M3 20L20 3', 'none', '#8d4550', 1) + P('M8 25L25 7', 'none', '#777', 1, '2 2') + dots([[3, 20]], '#8d4550'),
  lCrs: P('M3 10l22 6', 'none', '#8d4550', 1) + P('M18 1l-7 24', 'none', '#777', 1, '3 2') + dots([[3, 10]], '#8d4550'),
  tanA: P('M3 17l14 -8', 'none', '#8d4550', 1) + C(19, 13, 6, 'none', '#999').replace('/>', ' stroke-dasharray="2 2"/>') + dots([[3, 17]], '#8d4550'),
  tanB: P('M5 14l13 -8', 'none', '#8d4550', 1) + C(20, 10, 5, 'none', '#999').replace('/>', ' stroke-dasharray="2 2"/>') + C(7, 19, 5, 'none', '#999').replace('/>', ' stroke-dasharray="2 2"/>'),
  tanC: P('M1 16q6 -18 12 -9t13 -2', 'none', '#888', 1, '2 2') + P('M8 21l8 -8M6 16l6 -6', 'none', '#b8444f', 1) + dots([[8, 21]]),
  tanD: P('M1 24q5 -17 10 -11t14 5', 'none', '#888', 1, '2 2') + P('M10 15l10 -8M11 7l6 -4', 'none', '#b8444f', 1) + dots([[20, 7]]),
  meshB: P('M4 4h19l2 6v14h-21z', '#8eb3d3', '#4b7798') + P('M1 10l24 -4M1 18h25M8 1v24M13 2v22M19 2v22', 'none', '#36556f', 1),
  arcA: P('M4 4Q17 5 19 20', 'none', '#9a5560', 2) + dots([[4, 4], [14, 9], [19, 19]], '#b0434f'),
  arcB: P('M4 7Q17 8 19 22', 'none', '#9a5560', 2) + dots([[4, 7], [14, 11], [19, 22]], '#b0434f') + P('M6 1l4 3M20 20l5 -2', 'none', '#aaa', 1, '2 1'),
  uA: P('M3 3h20M3 23h20M23 1v4M23 21v4', 'none', '#888', 1, '3 1') + P('M14 3q9 1 9 10t-9 10', 'none', '#8d4550', 1),
  uB: P('M3 4h20v21', 'none', '#888', 1, '3 1') + P('M13 14l9 -9M16 5l6 0l1 7', 'none', '#b8444f', 1) + dots([[13, 14]]),
  arc3: P('M3 4Q22 5 23 22', 'none', '#5b4f53', 2) + dots([[3, 4], [17, 8], [23, 22]]),
  poly4: P('M3 16l6 -6l9 5l6 -7M7 3l1 7M17 22v-7', 'none', '#9a9a9a', 1) + dots([[8, 10], [17, 14]]) + dots([[3, 16], [24, 8], [7, 3], [17, 22]], '#959595'),
  offset: P('M2 23V12l5 -7h9v5q9 0 9 7t-8 7h-15z', '#fff', '#4d4347', 1) + P('M6 20v-7l4 -4h2v5q8 -1 8 3t-5 3z', 'none', '#b5525e', 1),
  bridge: P('M6 2q-7 1 -4 7h6M26 2h-6M6 17q-7 1 -4 7q6 2 10 -2M20 17h6', 'none', DARK, 2) + P('M10 8v12M19 3v14', 'none', NAVY, 1, '2 1') + P('M15 7v10', 'none', '#e08a3a', 3) + P('M8 23l15 -6', 'none', '#b8444f', 1),
  proj: P('M6 2l18 4', 'none', '#4650b4', 2) + P('M15 4v8', 'none', RED, 2) + P('M1 17l9 -6l15 6l-9 8z', '#cfd8e8', '#8b97ac') + P('M8 19q4 -6 10 -4', 'none', '#b8444f', 1),
  inter: P('M0 13l11 -6l15 6l-12 8z', '#d9e5ee', '#8b97ac') + P('M8 1l11 4v20l-11 -5z', '#a7bfce', '#6f8696') + P('M8 9l11 9', 'none', '#d5664e', 2),
  /* sketch bar */
  skNew: P('M3 2l17 4v19l-17 -4z', '#f1f1f1', DARK) + P('M6 6l5 1v6l-5 -1zM13 10h5v6h-5M7 16l10 3v3l-10 -3z', '#fff', DARK) + P('M20 1l2 4l4 2l-4 2l-2 4l-2 -4l-4 -2l4 -2z', '#f8e24d'),
  finish: R(0, 0, 26, 26, '#85c0f0', '#3382c4') + P('M2 5l19 -3l2 13l-15 3z', '#fff', '#333') + P('M3 5h4v4h-4zM11 4h4v4h-4zM18 3h3v4h-3zM7 8h4v4h-4zM15 8h4v4h-4zM5 12h3v4h-3zM12 12h4v4h-4zM19 11h3v4h-3z', '#222') + P('M4 8l7 17', 'none', '#444', 2),
  profile: P('M2 1v14q1 7 5 7t5 -8t5 -7t6 8', 'none', '#5b4f53', 2) + dots([[2, 15], [12, 15], [23, 15]]),
  circle: C(13, 13, 12, 'none', '#48484c', 1),
  fillet: P('M2 2h22v22', 'none', '#777', 1) + P('M10 2q14 0 14 13', 'none', '#d25c6a', 2),
  champ: P('M1 2h23v23', 'none', '#999', 1) + P('M8 2l8 4l8 10', 'none', '#d88a92', 2),
  rect2: R(3, 5, 22, 16, '#fff', '#5b4f53', 1) + dots([[3, 5], [25, 21]]),
  plusB: P('M13 4v20M3 14h20', 'none', DARK, 2),
  qtrim: P('M5 1l11 24M1 18h13', 'none', DARK, 1) + P('M14 18h11', 'none', '#999', 1, '1 1') + pencil(13, 17),
  qext: P('M5 1l11 24M1 18h13', 'none', DARK, 1) + pencil(14, 17),
  corner: P('M0 12h16M16 10v15', 'none', DARK, 2) + P('M12 6l11 11', 'none', '#a2696f', 1) + P('M16 1v9M16 12h10', 'none', '#c99', 1, '2 1'),
  dimLt: P('M1 9v13M25 9v13M1 15h24', 'none', '#cf4d46', 1) + P('M1 15l6 -3v6zM25 15l-6 -3v6z', '#cf4d46') + P('M14 0h8l-4 7h5l-13 11l4 -8h-5z', '#f9b93c', '#d9812a'),
  cons: P('M2 17l7 -9M7 17l7 -9M20 14v11M13 24h13', 'none', '#a8579b', 1),
  symm: P('M6 3h-4v20h22v-20h-4', '#f4f4fb', '#333c74', 1) + P('M13 2v23', 'none', DARK, 1, '4 2') + P('M7 1v7l4 -4zM19 1v7l-4 -4z', '#a8579b'),
  showc: P('M-1 10l7 5l-7 6z', '#1d8a40') + P('M10 13l8 -11M17 13l8 -11M18 15v10M12 25h12', 'none', '#463650', 2),
  conv: R(1, 1, 12, 11, '#fff', DARK) + R(11, 14, 15, 11, '#f2f2f2', DARK) + R(1, 18, 7, 7, '#fff', '#777') + P('M5 23l-2 -2v-1h3', 'none', DARK) + pencil(14, 18),
  dimE: P('M12 3q-9 -5 -10 4q2 5 9 2M24 2l-10 10M18 2h6v6', 'none', '#c9c9c9', 2) + P('M3 14l8 2l13 -4v9l-12 4l-9 -3z', '#e3e3e3', '#cdcdcd', 1),
  dimF: P('M12 3q-9 -5 -10 4q2 5 9 2', 'none', '#c9c9c9', 2) + P('M2 17l12 -6l11 9l-10 5z', '#e3e3e3', '#cdcdcd', 1),
  /* navigator */
  clock: C(13, 13, 12, '#8c97a6', '#6d7580') + C(13, 13, 9, '#eef5fc') + P('M13 6v8h6', 'none', '#112', 2),
  views: P('M2 8l10 -6l10 5v12l-10 6l-10 -6zM2 8l10 5l10 -6M12 13v12M12 2v11M2 19l10 -6l10 6', '#e9f8ee', '#189a62', 2) + P('M16 25l10 -4', 'none', '#e26a48', 3),
  tick: P('M3 13l7 8l13 -17', 'none', '#22b24a', 5),
  camera: P('M3 6l18 -4v6l4 2v10l-8 5l-14 -1z', '#f8e4e4', '#c84640', 2) + C(13, 14, 6, '#8a55a8', '#462466') + C(13, 14, 2, '#fff'),
  folder, folderEq: folder + P('M14 2h11M14 6h11', 'none', '#4157b4', 2),
  sketch: R(1, 1, 24, 24, '#e8f4ff', '#257fd0', 3).replace('/>', ' stroke-dasharray="3 3"/>') + P('M5 5h6v6h-6zM14 6h6v7h-6zM6 15h7v6h-7zM16 16h5v5h-5z', '#fff', '#153c70', 2) + C(13, 12, 2, '#eabb42'),
  gear: P('M13 3v3M13 20v3M3 13h3M20 13h3M6 6l2 2M18 18l2 2M20 6l-2 2M6 20l2 -2', 'none', '#444', 3) + C(13, 13, 7, '#dcdcde', '#444', 2),
  asm: cube(5, 7, 5, '#ffe68a', '#f1bf2d', '#d99c1a', '#b88c22') + cube(11, 10, 4, '#ffe68a', '#f1bf2d', '#d99c1a', '#b88c22') + cube(18, 21, 5, '#ffe68a', '#f1bf2d', '#d99c1a', '#b88c22') + P('M6 14v12M6 20h6', 'none', '#2c2ca2', 2) + P('M16 13h10', 'none', '#555', 1),
  constr: P('M4 0l8 6l-8 6zM21 0l-8 6l8 6z', '#2c2cb2') + P('M13 0v26', 'none', '#333', 1, '3 2') + R(1, 15, 9, 10, '#f2e531', '#8a8212') + P('M15 14l11 11h-11z', '#cf2017', '#7d120c'),
  part: can(1, 4, 11, 7, '#d985c4', '#efb4dd', '#973f8a') + P('M6 14v11M6 20h6', 'none', '#5a2c8a', 2) + P('M15 10h9', 'none', '#555', 1) + C(18, 20, 5, '#fff', '#a3458e', 1) + C(18, 20, 2, '#a3458e'),
  books: P('M0 7l5 -5h5v19l-5 4h-5z', '#ee9428', '#8c5312') + P('M8 7l5 -5h4v19l-4 4h-5z', '#3faf3c', '#1d6b1d') + P('M15 7l6 -6h5v17l-6 7h-5z', '#2e8fdd', '#154f86') + P('M2 7l4 -4M10 7l4 -4M18 7l5 -5', 'none', '#fff', 2),
  web: C(9, 17, 8, '#1a70dc', '#0c4594') + P('M9 11v2M7 16h2v5M6 21h6', 'none', '#fff', 3) + P('M10 6q9 0 11 12M13 1q12 3 13 15', 'none', '#4581cf', 3),
  page: P('M3 1h13l6 6v18h-19z', '#f5f9ff', '#4d6ab7', 1) + P('M16 1v6h6', 'none', '#3d5aa7') + C(13, 16, 6, '#399a49', '#246d31') + P('M10 13q5 -3 7 5l-4 3z', '#5cb3e6'),
  clock2: C(13, 13, 12, '#9ea4ac', '#6c7279') + C(13, 13, 9, '#f0f6fc') + P('M13 5v8h7', 'none', '#111', 2),
  palette: R(2, 1, 9, 5, '#ee2c1d') + R(2, 5, 9, 5, '#f4e22a') + R(2, 10, 9, 6, '#30d43c') + R(2, 16, 9, 5, '#1cc3dc') + R(2, 20, 9, 6, '#2442d8') + C(12, 8, 4, '#fff') + P('M14 11l7 13', 'none', '#111', 4),
  wizard: P('M3 2h8v20h-8z', '#4c87d7', '#3d60a0') + P('M11 5h15M13 9h10', 'none', '#6279b5', 2) + C(12, 7, 4, '#fff') + P('M14 10l6 11', 'none', '#222', 4) + P('M1 22l8 3', 'none', '#a0b05e', 2),
  robot: P('M8 3l10 -2l4 4M18 3l-7 8l4 6', 'none', '#666', 2) + P('M10 16l8 1v6h-9z', '#6a6a84', '#555') + P('M2 20h7v5h-7z', '#f3a52a'),
}

/* ---------- toolbar strings: v = drop arrow, | = divider, * = pressed ---------- */
const parse = (s: string): Item[] =>
  s.split(' ').map((t) => {
    const kinds: Record<string, Item['kind']> = { v: 'arrow', '>': 'more', '|': 'sep', '#': 'handle', '?': 'search', '<': 'foot', '<<': 'foot' }
    if (kinds[t]) return { kind: kinds[t], name: t, active: false }
    if (t.startsWith('t:')) return { kind: 'text', name: t.slice(2), active: false }
    if (t.endsWith('+')) return { kind: 'combo', name: t.slice(0, -1), active: false }
    return { kind: 'icon', name: t.replace('*', ''), active: t.startsWith('*') }
  })

const rows = [
  [
    { cls: 'auto', items: parse('# globe t:启动 v new open save | cut copy paste | undo v redo | rectsel v | info | ? >') },
    { cls: 'auto', items: parse('# fit v shade v cubeb v flago flagb v greybox v | door1 door2 >') },
    { cls: 'auto', items: parse('# layers layers v csysmove v tree csys0 csysr *csysact csyssave | brush fish | play v | t:简单干涉 surf meas v ruler >') },
  ],
  [
    { cls: 'feature', items: parse('# plane v extrude revolve block cone cyl tube holecube boss shell pad | datumup pattern patt2 mirror cyl2 sweep unite v bookcyl move split trim plate wrap thicken cyl3 | chamfer draft boxface tri sphere >') },
    { cls: 'auto', items: parse('# mMove v mTri v mX mCopy v mGrid v mDim v mSq rTri rMove v >') },
  ],
  [
    { cls: 'mould', items: parse('# note checkblock fourviews csyxyz cornerbox diamond bracket tools spring table bolt1 bolt2 tee mouse moldh blackh frame wrench bolth v moldred grid panel eye drum report >') },
  ],
]
const selBar = parse('dimA | dimB boxed v dimC dimD | dash v | house opencube | *snap *line *mid curve *poly cross *circ ring *plus *slash face | mesh')
const sketchBar = parse('# skNew finish t:完成草图 profile lineR arc3 circle fillet champ rect2 poly4 plusB offset v | qtrim qext corner | dimLt v | cons symm *showc v | conv dimE dimF >')

const columns = [
  { cls: 'wide', groups: [parse('# sNet sPlate sLift sCut sBow | sTwo sFrame | sZ | sRain+ sRed | sWave <'), parse('# wA wB wC wD wE wF wG+ <')] },
  { cls: 'slim fill', groups: [parse('# key kA kB kC kD kE <'), parse('# *chain | lineB lAxes lPar lCrs tanA tanB tanC tanD meshB | arcA arcB uA uB <<')] },
  { cls: 'slim late', groups: [parse('# lineR arc3 poly4 offset bridge proj inter <')] },
]

const menus: [string, string, string][] = [
  ['文件(', 'F', ')'], ['编辑(', 'E', ')'], ['视图(', 'V', ')'], ['插入(', 'S', ')'], ['格式(', 'R', ')'],
  ['工具(', 'T', ')'], ['装配(', 'A', ')'], ['信息(', 'I', ')'], ['分析(', 'L', ')'], ['首选项(', 'P', ')'],
  ['窗口(', 'O', ')'], ['GC工具箱', '', ''], ['帮助(', 'H', ')'], ['HB_MOULD ', 'M', '6.8'],
]

const tree = [
  { label: '历史记录模式', pics: ['clock'], box: '', depth: 0 },
  { label: '模型视图', pics: ['views'], box: '+', depth: 0 },
  { label: '摄像机', pics: ['tick', 'camera'], box: '+', depth: 0 },
  { label: '用户表达式', pics: ['folderEq'], box: '', depth: 0 },
  { label: '模型历史记录', pics: ['folder'], box: '−', depth: 0 },
  { label: '草图 (0) "SKETCH_...', pics: ['sketch'], box: '', depth: 1 },
]

const tabs = [
  { pic: 'asm' }, { pic: 'constr' }, { pic: 'part', on: true }, { pic: 'books' }, { pic: 'web', gap: true },
  { pic: 'page', gap: true }, { pic: 'clock2', gap: true }, { pic: 'palette' }, { pic: 'wizard' }, { pic: 'robot' },
]

/* ---------- QR artwork ---------- */
const random = (seed: number) => () => {
  seed = (seed * 1103515245 + 12345) & 0x7fffffff
  return ((seed >> 8) & 0xffff) / 0x10000
}
const finderAt = (x: number, y: number, fx: number, fy: number): boolean | null => {
  const dx = x - fx
  const dy = y - fy
  if (dx < -1 || dy < -1 || dx > 7 || dy > 7) return null
  const ring = Math.max(Math.abs(dx - 3), Math.abs(dy - 3))
  return ring === 3 || ring < 2
}
const SIZE = 37
const qrPath = (() => {
  const next = random(77)
  let d = ''
  for (let y = 0; y < SIZE; y++) {
    for (let x = 0; x < SIZE; x++) {
      const on = next() < 0.52
      const f = finderAt(x, y, 0, 0) ?? finderAt(x, y, SIZE - 7, 0) ?? finderAt(x, y, 0, SIZE - 7)
      const small = Math.max(Math.abs(x - 30), Math.abs(y - 30))
      const v = f ?? (small < 3 ? small !== 1 : on)
      if (v) d += `M${x} ${y}h1v1h-1z`
    }
  }
  return d
})()
const penguin = (() => {
  const next = random(2024)
  const keys = [[0, 8], [3, 13], [8, 16], [10, 17], [12, 18], [22, 18], [26, 20], [34, 23], [42, 24], [43, 18], [47, 16], [48, 13], [49, 15], [51, 18], [53, 17]]
  const half = (y: number) => {
    for (let i = 1; i < keys.length; i++) {
      const [y0, w0] = keys[i - 1]
      const [y1, w1] = keys[i]
      if (y <= y1) return w0 + ((w1 - w0) * (y - y0)) / (y1 - y0)
    }
    return 0
  }
  const shades = ['', '', '']
  for (let y = 0; y < 53; y++) {
    for (let x = 0; x < 49; x++) {
      const roll = next()
      const tone = Math.floor(next() * 3)
      const f = finderAt(x, y, 7, 11) ?? finderAt(x, y, 34, 11) ?? finderAt(x, y, 7, 35)
      const dx = Math.abs(x - 24)
      const inside = dx <= half(y) && !(y > 49 && dx < 8)
      if (f ?? (inside && roll < 0.58)) shades[f ? 0 : tone] += `M${x} ${y}h1v1h-1z`
    }
  }
  return shades
})()
const penguinTones = ['#1b7cc6', '#39a0dc', '#1b6fbc']
</script>

<template>
  <div class="screen">
    <div class="desktop">
      <div class="nx">
        <header class="title">
          <b class="logo">NX</b>
          <h1>UG10.0 只有学习才有希望升值。平淡老师专用讲解 - 建模 - [20.prt （修改的） ]</h1>
          <span class="siemens">SIEMENS</span>
          <div class="winbtns">
            <button aria-label="最小化"><svg viewBox="0 0 16 16"><path d="M3 13h9" stroke-width="2" /></svg></button>
            <button aria-label="最大化"><svg viewBox="0 0 16 16"><path d="M2 3h13v11h-13zM2 4h13" /></svg></button>
            <button aria-label="关闭"><svg viewBox="0 0 16 16"><path d="M2 2l12 12M14 2l-12 12" stroke-width="2" /></svg></button>
          </div>
        </header>

        <nav class="menu">
          <svg class="menu-logo" viewBox="0 0 20 20"><path d="M3 6l7 -4v8l7 2v4l-7 3l-8 -4z" fill="#1f6fd6" stroke="#0e4a9f" /><path d="M10 10l-4 2l5 2l6 -2" fill="#8cc1ff" /></svg>
          <a v-for="m in menus" :key="m[0]" href="#">{{ m[0] }}<u>{{ m[1] }}</u>{{ m[2] }}</a>
          <div class="winbtns small">
            <button aria-label="最小化文档"><svg viewBox="0 0 16 16"><path d="M3 12h9" stroke-width="3" /></svg></button>
            <button aria-label="还原文档"><svg viewBox="0 0 16 16"><path d="M5 6v-4h10v7h-3M1 7h10v6h-10z" stroke-width="2" /></svg></button>
            <button aria-label="关闭文档"><svg viewBox="0 0 16 16"><path d="M3 3l10 10M13 3l-10 10" stroke-width="3" /></svg></button>
          </div>
        </nav>

        <div v-for="(row, r) in rows" :key="r" class="row">
          <div v-for="(g, k) in row" :key="k" class="group" :class="g.cls" role="toolbar">
            <template v-for="(it, i) in g.items" :key="i">
              <span v-if="it.kind === 'handle'" class="handle" />
              <span v-else-if="it.kind === 'sep'" class="sep" />
              <button v-else-if="it.kind === 'arrow'" class="arrow" aria-label="更多选项" />
              <button v-else-if="it.kind === 'more'" class="arrow more" aria-label="工具条选项" />
              <button v-else-if="it.kind === 'text'" class="label" :class="{ long: it.name.length > 2 }">{{ it.name }}</button>
              <label v-else-if="it.kind === 'search'" class="search">
                <input type="text" value="查找命令" aria-label="查找命令" />
                <svg viewBox="0 0 18 18"><circle cx="11" cy="6" r="5" fill="#fff" stroke="#555" stroke-width="1" /><path d="M7 10l-6 6" stroke="#666" stroke-width="3" /></svg>
              </label>
              <button v-else class="tool" :class="{ on: it.active }" :aria-label="it.name"><svg viewBox="0 0 26 26" v-html="icons[it.name]" /></button>
            </template>
          </div>
        </div>

        <div class="row select">
          <select class="filter" aria-label="选择过滤器"><option>没有选择过滤器</option></select>
          <select class="scope" aria-label="选择范围"><option>整个装配</option></select>
          <template v-for="(it, i) in selBar" :key="i">
            <span v-if="it.kind === 'sep'" class="sep" />
            <button v-else-if="it.kind === 'arrow'" class="arrow" aria-label="更多选项" />
            <button v-else class="tool" :class="{ on: it.active }" :aria-label="it.name"><svg viewBox="0 0 26 26" v-html="icons[it.name]" /></button>
          </template>
          <button class="arrow more end" aria-label="工具条选项" />
        </div>

        <main class="work">
          <div v-for="(col, c) in columns" :key="c" class="column" :class="col.cls">
            <div v-for="(g, k) in col.groups" :key="k" class="stack" role="toolbar">
              <template v-for="(it, i) in g" :key="i">
                <span v-if="it.kind === 'handle'" class="handle" />
                <span v-else-if="it.kind === 'sep'" class="sep" />
                <div v-else-if="it.kind === 'foot'" class="foot">
                  <button class="left" aria-label="工具条选项" />
                  <svg v-if="it.name === '<<'" viewBox="0 0 10 12"><path d="M1 1l4 3l4 -3M1 6l4 3l4 -3" fill="none" stroke="#111" stroke-width="2" /></svg>
                </div>
                <div v-else-if="it.kind === 'combo'" class="pair">
                  <button class="tool" :aria-label="it.name"><svg viewBox="0 0 26 26" v-html="icons[it.name]" /></button>
                  <button class="arrow" aria-label="更多选项" />
                </div>
                <button v-else class="tool" :class="{ on: it.active }" :aria-label="it.name"><svg viewBox="0 0 26 26" v-html="icons[it.name]" /></button>
              </template>
            </div>
          </div>

          <svg class="canvas" viewBox="195 225 1367 776">
            <defs>
              <marker id="tip" viewBox="0 0 12 6" refX="12" refY="3" markerWidth="12" markerHeight="6" markerUnits="userSpaceOnUse" orient="auto-start-reverse"><path d="M0 0L12 3L0 6z" fill="#3c66c4" /></marker>
            </defs>
            <rect x="831" y="565" width="96" height="96" rx="1" fill="#a9bbca" stroke="#1e96ea" stroke-width="2" />
            <g stroke="#4a74c6" fill="none">
              <path d="M611.5 318V446M1146.5 318V446M878.5 383V522M1150 445.5H1331M1150 780.5H1331M985 613.5H1248" />
              <g marker-start="url(#tip)" marker-end="url(#tip)">
                <path d="M612 330.500H1146" /><path d="M612 395.500H878" /><path d="M1234.500 447V613" /><path d="M1317.500 447V780" />
              </g>
            </g>
            <g class="dims">
              <text x="879" y="326">p2:160.0</text>
              <text x="745" y="391">p3:80.0</text>
              <text transform="translate(1231 529) rotate(-90)">p1:50.0</text>
              <text transform="translate(1314 613) rotate(-90)">p0:100.0</text>
            </g>
            <g fill="none" stroke="#2438d8">
              <path d="M624 446V458H612M1134 446V458H1146M624 779V768H612M1134 779V768H1146" stroke="#3158c8" stroke-width="2" />
              <rect x="611.500" y="445" width="535" height="335" stroke="#1a1ee0" stroke-width="2" />
              <path d="M868 445h22" stroke="#1330e8" stroke-width="4" />
            </g>
            <g fill="#1425e4"><circle cx="612" cy="445" r="4" /><circle cx="1147" cy="445" r="4" /><circle cx="612" cy="780" r="4" /><circle cx="1147" cy="780" r="4" /></g>
            <g class="axis">
              <text x="881" y="612" fill="#2559b8">ZC</text>
              <path d="M878.500 616V540" stroke="#1f8432" stroke-width="4" /><path d="M873 542l6 -22l5 22z" fill="#1f8432" />
              <path d="M877 613H952" stroke="#dc3325" stroke-width="4" /><path d="M950 607l23 6l-23 6z" fill="#e23a2a" />
              <text x="873" y="517" fill="#2f8f45">Y</text>
              <text x="885" y="548" fill="#2f9247">YC</text>
              <text x="927" y="608" fill="#e2473a">XC</text>
              <text x="976" y="619" fill="#e2473a">X</text>
            </g>
            <g>
              <circle cx="744.500" cy="555.500" r="33" fill="#d2c81e" />
              <circle cx="744.500" cy="555.500" r="13" fill="none" stroke="#222" stroke-dasharray="14 6" stroke-dashoffset="-3" />
              <path d="M744.500 538v35M727 555.500h35" stroke="#222" stroke-width="4" /><path d="M744.500 539v33M728 555.500h33" stroke="#e2dfbf" stroke-width="2" />
            </g>
            <g class="axis">
              <rect x="260" y="908" width="24" height="26" fill="#cfd0d2" stroke="#b1b2b4" />
              <path d="M258.500 934V902" stroke="#1f8432" stroke-width="2" /><path d="M255 904l3 -13l4 13z" fill="#1f8432" />
              <path d="M260 935.500H290" stroke="#dc3325" stroke-width="2" /><path d="M290 932l13 4l-13 4z" fill="#dc3325" />
              <rect x="255" y="932" width="7" height="7" fill="#1746d8" />
              <text x="254" y="890" fill="#2f8f45" class="mini">Y</text>
              <text x="303" y="940" fill="#dc3325" class="mini">X</text>
            </g>
          </svg>

          <aside class="nav">
            <div class="nav-title"><svg viewBox="0 0 14 13"><path d="M1 1h12v11h-12zM1 2h12" fill="none" stroke="#222" /></svg>部件导航器</div>
            <div class="nav-body">
              <table>
                <thead><tr><th>名称<span class="up" /></th><th class="thin">:</th></tr></thead>
                <tbody>
                  <tr v-for="n in tree" :key="n.label">
                    <td>
                      <div class="node" :class="{ child: n.depth }">
                        <span class="twig"><i v-if="n.box">{{ n.box }}</i></span>
                        <input v-if="n.depth" type="checkbox" checked :aria-label="n.label" />
                        <svg v-for="p in n.pics" :key="p" viewBox="0 0 26 26" v-html="icons[p]" />
                        <span class="name">{{ n.label }}</span>
                      </div>
                    </td>
                    <td class="thin" />
                  </tr>
                </tbody>
              </table>
            </div>
          </aside>

          <div class="tabs">
            <button class="gear" aria-label="资源条选项"><svg viewBox="0 0 26 26" v-html="icons.gear" /></button>
            <button v-for="t in tabs" :key="t.pic" class="tab" :class="{ on: t.on, gap: t.gap }" :aria-label="t.pic"><svg viewBox="0 0 26 26" v-html="icons[t.pic]" /></button>
          </div>
        </main>

        <div class="row sketch">
          <div class="group auto" role="toolbar">
            <template v-for="(it, i) in sketchBar" :key="i">
              <span v-if="it.kind === 'handle'" class="handle" />
              <span v-else-if="it.kind === 'sep'" class="sep" />
              <button v-else-if="it.kind === 'arrow'" class="arrow" aria-label="更多选项" />
              <button v-else-if="it.kind === 'more'" class="arrow more" aria-label="工具条选项" />
              <button v-else-if="it.kind === 'text'" class="label long">{{ it.name }}</button>
              <button v-else class="tool" :class="{ on: it.active }" :aria-label="it.name"><svg viewBox="0 0 26 26" v-html="icons[it.name]" /></button>
            </template>
          </div>
        </div>

        <footer class="status">
          <span class="prompt">选择对象并使用 MB3，或者双击某一对象</span>
          <span>草图已完全约束</span>
        </footer>
      </div>
    </div>

    <section class="promo">
      <div class="codes">
        <figure>
          <figcaption><span class="qq">QQ</span>资料群</figcaption>
          <svg class="penguin" viewBox="0 0 49 53" shape-rendering="crispEdges"><path v-for="(d, i) in penguin" :key="i" :d="d" :fill="penguinTones[i]" /></svg>
        </figure>
        <figure>
          <figcaption>微信资料</figcaption>
          <div class="code">
            <svg viewBox="0 0 37 37" shape-rendering="crispEdges"><path :d="qrPath" /></svg>
            <span class="seal">模具<br />设计</span>
          </div>
        </figure>
      </div>
      <p>扫码免费领取海量资料</p>
    </section>
  </div>
</template>

<style>
body { margin: 0; background: #000; }
</style>

<style scoped>
* { box-sizing: border-box; }
button { border: 0; margin: 0; padding: 0; background: none; font: inherit; color: inherit; }
.screen { min-height: 100vh; padding: 0 57px 2px 55px; background: #000; display: flex; font: 12px/16px "Noto Sans", "Noto Sans CJK SC", sans-serif; color: #1d1d20; position: relative; }
.desktop { flex: 1; min-width: 0; display: flex; padding: 2px 2px 4px 6px; background: linear-gradient(#0b4aa6, #0f5cc2 30%, #1397ea 60%, #1e88dc); border-top: 2px solid #0a0f4a; }
.nx { flex: 1; min-width: 0; display: flex; flex-direction: column; background: #fff; padding: 0 3px 0 5px; border-top: 1px solid #cfe3f6; border-bottom: 7px solid #5c8480; }

.title { height: 37px; display: flex; align-items: center; padding-left: 4px; }
.logo { width: 43px; font: 700 26px/30px "Noto Sans", sans-serif; color: #7e95a3; border-right: 1px solid #ddd; }
h1 { flex: 1; margin: 0 0 0 5px; font-size: 14px; line-height: 20px; font-weight: 400; white-space: pre; }
.siemens { font: 900 16px/20px "Noto Sans", sans-serif; color: #0b8a8b; margin-right: 28px; }
.winbtns { display: flex; gap: 10px; padding-right: 7px; }
.winbtns svg { width: 16px; height: 16px; display: block; fill: none; stroke: #333; }
.menu { height: 30px; background: #c7d5d7; display: flex; align-items: center; gap: 15px; padding: 0 0 3px 7px; font-size: 13px; line-height: 20px; }
.menu-logo { width: 20px; height: 20px; margin-right: -8px; }
.menu a { color: #2a3337; text-decoration: none; white-space: pre; }
.small { margin-left: auto; gap: 4px; }

.row { height: 39px; display: flex; border-bottom: 1px solid #ececec; }
.group { height: 38px; display: flex; align-items: center; border-right: 1px solid #ddd; }
.feature { width: 1157px; }
.mould { width: 918px; }
.tool { flex: 1 1 35px; height: 35px; display: flex; align-items: center; justify-content: center; }
.auto > .tool { flex: 0 0 35px; }
.tool svg { width: 26px; height: 26px; display: block; overflow: visible; }
.on { background: #c3d4d4; }
.handle { flex: 0 0 8px; height: 30px; background: radial-gradient(circle at 2px 2px, #b9b9bd 1px, transparent 2px) 3px 0 / 4px 5px; background-clip: content-box; padding: 0 2px; }
.sep { flex: 0 0 7px; height: 24px; background: linear-gradient(#d9d9dc, #d9d9dc) center / 1px 100% no-repeat; }
.arrow { flex: 0 0 14px; height: 26px; display: flex; align-items: center; justify-content: center; }
.arrow::before { content: ""; border: 4px solid transparent; border-top: 5px solid #222; border-bottom: 0; }
.more { flex-basis: 18px; height: 16px; align-self: flex-end; margin-bottom: 4px; }
.label { flex: 0 0 26px; white-space: nowrap; text-align: left; }
.long { flex-basis: 57px; text-align: center; }
.search { flex: 0 0 142px; min-width: 0; margin: 0 2px 0 4px; height: 23px; border: 1px solid #a9a9ad; display: flex; align-items: center; padding: 0 2px; }
.search input { flex: 1 1 0; width: 0; min-width: 0; border: 0; padding: 0; font: inherit; color: inherit; background: none; }
.search svg { flex: none; width: 18px; height: 18px; }

.select { height: 36px; align-items: center; padding-left: 5px; border-bottom: 1px solid #8f8f93; }
select { appearance: none; height: 23px; border: 1px solid #a2a2a6; border-radius: 0; font: inherit; color: inherit; padding: 0 2px; background: #fff conic-gradient(from 315deg at 50% 100%, #222 90deg, transparent 0) right 5px center / 10px 5px no-repeat; }
.filter { width: 151px; margin-right: 8px; }
.scope { width: 159px; margin-right: 4px; }
.select .tool { flex: 0 0 26px; height: 25px; }
.select .tool svg { width: 22px; height: 22px; }
.select .sep { flex-basis: 6px; }
.end { margin-left: auto; }

.work { flex: 1; display: flex; }
.column { display: flex; flex-direction: column; border-right: 1px solid #dcdcde; }
.wide { width: 52px; }
.slim { width: 38px; }
.late { width: 39px; padding-top: 3px; }
.stack { display: flex; flex-direction: column; align-items: center; border-bottom: 1px solid #dcdcde; padding-bottom: 1px; }
.stack + .stack { padding-top: 1px; }
.stack .tool { flex: 0 0 35px; width: 35px; }
.fill .stack + .stack { flex: 1; }
.fill .stack + .stack > .tool, .fill .stack + .stack > .foot { flex: 1 1 auto; }
.stack .handle { flex: 0 0 8px; height: 8px; width: 36px; background-position: 0 2px; }
.slim .handle { width: 30px; }
.stack .sep { flex: 0 0 7px; width: 80%; background-size: 100% 1px; }
.foot { height: 16px; align-self: stretch; display: flex; align-items: center; justify-content: space-between; padding: 0 4px 0 7px; }
.foot svg { width: 10px; height: 12px; }
.left { width: 8px; height: 10px; display: flex; align-items: center; }
.left::before { content: ""; border: 4px solid transparent; border-right: 5px solid #111; border-left: 0; }
.pair { display: flex; align-self: stretch; align-items: center; }

.canvas { flex: 1; min-width: 0; min-height: 0; display: block; background: linear-gradient(#b4b5b7, #c2c3c5 20%, #d3d4d6 50%, #e3e4e6 75%, #e7e8ea); }
.dims text { font: 15px "Liberation Sans", sans-serif; fill: #3c62bd; text-anchor: middle; }
.axis text { font: 16px "Liberation Sans", sans-serif; }
.axis .mini { font-size: 12px; }

.nav { width: 260px; border-left: 2px solid #9a9a9e; background: #fff; padding: 0 7px 0 11px; font-size: 14px; line-height: 20px; display: flex; flex-direction: column; }
.nav-title { height: 33px; display: flex; align-items: center; gap: 13px; padding: 0 0 2px 2px; }
.nav-title svg { width: 14px; height: 13px; }
.nav-body { flex: 1; border: 1px solid #d5d5d8; border-width: 0 1px; background: repeating-linear-gradient(#fff 0 22px, #f1f1f1 22px 23px, #f9f9f9 23px 45px, #f1f1f1 45px 46px) 0 23px; }
table { width: 100%; border-collapse: collapse; table-layout: fixed; }
th { height: 23px; padding: 0 0 0 8px; background: #efefef; text-align: left; font-weight: 400; }
.thin { width: 14px; padding: 0; border-left: 1px solid #e6e6e6; text-align: right; }
.up { display: inline-block; margin-left: 22px; border: 5px solid transparent; border-bottom: 6px solid #222; border-top: 0; vertical-align: 3px; }
td { height: 23px; padding: 0; }
.node { height: 23px; display: flex; align-items: center; gap: 1px; white-space: nowrap; }
.twig { flex: 0 0 21px; padding-left: 7px; height: 23px; display: flex; align-items: center; background: linear-gradient(#ccc, #ccc) 11px 0 / 1px 100% no-repeat; }
.twig i { width: 9px; height: 11px; background: #fff; font: 12px/10px "Liberation Sans", sans-serif; text-align: center; }
.node svg { width: 18px; height: 18px; flex: none; }
.name { margin-left: 3px; }
.child { font-weight: 700; }
.child .twig { flex-basis: 46px; background: none; }
.child input { appearance: none; flex: none; width: 15px; height: 15px; margin: 0; border: 2px solid #222; display: flex; align-items: center; justify-content: center; }
.child input::before { content: "✔"; font: 13px/11px "DejaVu Sans", sans-serif; color: #1fa344; }

.tabs { width: 36px; background: #dcdcde; border-left: 1px solid #9a9a9e; display: flex; flex-direction: column; }
.tabs svg { width: 26px; height: 26px; display: block; }
.gear { height: 32px; margin-bottom: 15px; padding-left: 6px; }
.gear svg { width: 22px; height: 22px; }
.tab { height: 48px; padding-left: 3px; display: flex; align-items: center; }
.gap { margin-top: 13px; }
.tab.on { background: #fff; margin: 0 2px 0 -1px; }

.sketch { height: 40px; padding-left: 397px; border-bottom: 1px solid #bdbdbf; }
.status { height: 25px; display: flex; align-items: center; padding: 0 0 3px 3px; font-weight: 500; }
.prompt { flex: 0 0 832px; }

.promo { position: absolute; right: 2px; bottom: 2px; width: 364px; height: 274px; background: #fff; color: #ff5005; font-family: "Noto Sans CJK SC", sans-serif; font-weight: 900; display: flex; flex-direction: column; }
.codes { flex: 1; display: flex; }
figure { margin: 0; flex: 1; display: flex; flex-direction: column; align-items: center; }
figure:first-child { flex: 0 0 180px; padding-right: 8px; }
figcaption { height: 44px; font-size: 42px; line-height: 40px; font-weight: 700; white-space: nowrap; }
.qq { font-family: "Liberation Mono", monospace; font-size: 36px; }
.penguin { width: 147px; height: 159px; margin-top: 12px; }
.code { width: 155px; height: 155px; margin: 13px 6px 0 0; position: relative; }
.code svg { width: 155px; height: 155px; display: block; }
.seal { position: absolute; left: 58px; top: 58px; width: 40px; height: 40px; border: 3px solid #fff; border-radius: 4px; background: #d9343c; color: #fff; font: 700 14px/17px "Noto Sans CJK SC", sans-serif; text-align: center; }
figure + figure { border-left: 1px solid #777; border-image: linear-gradient(transparent 16%, #777 16% 90%, transparent 90%) 1; }
.promo p { margin: 0; height: 46px; font-size: 36px; line-height: 42px; text-align: center; white-space: nowrap; }
</style>
